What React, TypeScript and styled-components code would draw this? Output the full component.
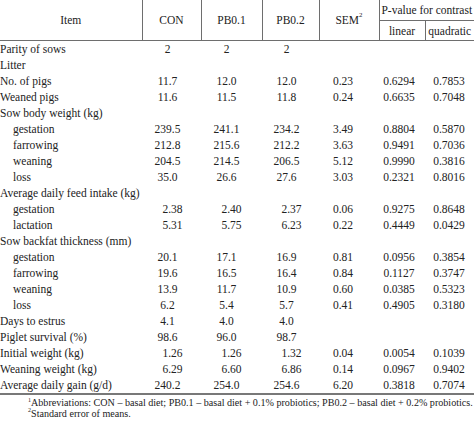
import React from 'react';
import styled, { createGlobalStyle } from 'styled-components';

const serif = '"Liberation Serif", "Times New Roman", serif';
const ink = '#222222';
const rule = '#6e6e6e';

const GlobalStyle = createGlobalStyle`
  html, body {
    margin: 0;
    padding: 0;
    background: #ffffff;
  }
  body {
    font-family: ${serif};
    color: ${ink};
  }
  table, th, td {
    font-family: ${serif};
  }
`;

const Page = styled.div`
  width: 474px;
  height: 427px;
  overflow: hidden;
  background: #fff;
`;

const Table = styled.table`
  width: 474px;
  table-layout: fixed;
  border-collapse: collapse;
  font-family: ${serif};
  font-size: 11.5px;
  color: ${ink};
`;

const HeadCell = styled.th<{ $last?: boolean; $split?: boolean; $h: number }>`
  font-family: ${serif};
  font-weight: normal;
  text-align: center;
  padding: 0;
  height: ${(p) => p.$h}px;
  line-height: 14px;
  border-right: ${(p) => (p.$last ? 'none' : `1px solid ${rule}`)};
  border-bottom: ${(p) => (p.$split ? `1px solid ${rule}` : 'none')};
  white-space: nowrap;
`;

const HeadRow = styled.tr<{ $bottom?: boolean }>`
  border-bottom: ${(p) => (p.$bottom ? `1.5px solid ${rule}` : 'none')};
`;

const Sup = styled.sup`
  font-size: 0.6em;
  line-height: 0;
  vertical-align: top;
  position: relative;
  top: 0.3em;
`;

const Row = styled.tr<{ $last?: boolean }>`
  height: 16px;
  border-bottom: ${(p) => (p.$last ? `2px solid #787878` : 'none')};
`;

const Label = styled.td<{ $sub?: boolean }>`
  font-family: ${serif};
  padding: 0 0 0 ${(p) => (p.$sub ? '13px' : '0')};
  white-space: nowrap;
  line-height: 16px;
  height: 16px;
`;

const Value = styled.td<{ $pad: number; $shift?: boolean }>`
  font-family: ${serif};
  text-align: center;
  padding: 0 ${(p) => p.$pad}px 0 ${(p) => (p.$shift ? 10 : 0)}px;
  white-space: nowrap;
  line-height: 16px;
  height: 16px;
`;

const Notes = styled.div`
  padding: 3px 0 0 28px;
  font-family: ${serif};
  font-size: 10.1px;
  line-height: 10.5px;
  color: ${ink};
  white-space: nowrap;
`;

const Note = styled.div``;

type Item = {
  label: string;
  sub?: boolean;
  shift?: boolean;
  values?: string[];
};

const rows: Item[] = [
  { label: 'Parity of sows', values: ['2', '2', '2', '', '', ''] },
  { label: 'Litter' },
  { label: 'No. of pigs', values: ['11.7', '12.0', '12.0', '0.23', '0.6294', '0.7853'] },
  { label: 'Weaned pigs', values: ['11.6', '11.5', '11.8', '0.24', '0.6635', '0.7048'] },
  { label: 'Sow body weight (kg)' },
  { label: 'gestation', sub: true, values: ['239.5', '241.1', '234.2', '3.49', '0.8804', '0.5870'] },
  { label: 'farrowing', sub: true, values: ['212.8', '215.6', '212.2', '3.63', '0.9491', '0.7036'] },
  { label: 'weaning', sub: true, values: ['204.5', '214.5', '206.5', '5.12', '0.9990', '0.3816'] },
  { label: 'loss', sub: true, values: ['35.0', '26.6', '27.6', '3.03', '0.2321', '0.8016'] },
  { label: 'Average daily feed intake (kg)' },
  { label: 'gestation', sub: true, shift: true, values: ['2.38', '2.40', '2.37', '0.06', '0.9275', '0.8648'] },
  { label: 'lactation', sub: true, shift: true, values: ['5.31', '5.75', '6.23', '0.22', '0.4449', '0.0429'] },
  { label: 'Sow backfat thickness (mm)' },
  { label: 'gestation', sub: true, values: ['20.1', '17.1', '16.9', '0.81', '0.0956', '0.3854'] },
  { label: 'farrowing', sub: true, values: ['19.6', '16.5', '16.4', '0.84', '0.1127', '0.3747'] },
  { label: 'weaning', sub: true, values: ['13.9', '11.7', '10.9', '0.60', '0.0385', '0.5323'] },
  { label: 'loss', sub: true, values: ['6.2', '5.4', '5.7', '0.41', '0.4905', '0.3180'] },
  { label: 'Days to estrus', values: ['4.1', '4.0', '4.0', '', '', ''] },
  { label: 'Piglet survival (%)', values: ['98.6', '96.0', '98.7', '', '', ''] },
  { label: 'Initial weight (kg)', shift: true, values: ['1.26', '1.26', '1.32', '0.04', '0.0054', '0.1039'] },
  { label: 'Weaning weight (kg)', shift: true, values: ['6.29', '6.60', '6.86', '0.14', '0.0967', '0.9402'] },
  { label: 'Average daily gain (g/d)', values: ['240.2', '254.0', '254.6', '6.20', '0.3818', '0.7074'] },
];

const widths = [142, 59, 61, 57, 60, 46, 49];
const pads = [8, 10, 8, 12, 6, 1];

export default function App() {
  return (
    <Page>
      <GlobalStyle />
      <Table>
        <colgroup>
          {widths.map((w, i) => (
            <col key={i} style={{ width: w }} />
          ))}
        </colgroup>
        <thead>
          <HeadRow>
            <HeadCell $h={20} rowSpan={2}>Item</HeadCell>
            <HeadCell $h={20} rowSpan={2}>CON</HeadCell>
            <HeadCell $h={20} rowSpan={2}>PB0.1</HeadCell>
            <HeadCell $h={20} rowSpan={2}>PB0.2</HeadCell>
            <HeadCell $h={20} rowSpan={2}>
              SEM<Sup>2</Sup>
            </HeadCell>
            <HeadCell $h={20} colSpan={2} $last $split>
              P-value for contrast
            </HeadCell>
          </HeadRow>
          <HeadRow $bottom>
            <HeadCell $h={19}>linear</HeadCell>
            <HeadCell $h={19} $last>quadratic</HeadCell>
          </HeadRow>
        </thead>
        <tbody>
          {rows.map((r, i) => (
            <Row key={i} $last={i === rows.length - 1}>
              <Label $sub={r.sub}>{r.label}</Label>
              {(r.values ?? ['', '', '', '', '', '']).map((v, j) => (
                <Value key={j} $pad={pads[j]} $shift={r.shift && j < 3}>
                  {v}
                </Value>
              ))}
            </Row>
          ))}
        </tbody>
      </Table>
      <Notes>
        <Note>
          <Sup>1</Sup>Abbreviations: CON – basal diet; PB0.1 – basal diet + 0.1% probiotics; PB0.2 – basal diet + 0.2% probiotics.
        </Note>
        <Note>
          <Sup>2</Sup>Standard error of means.
        </Note>
      </Notes>
    </Page>
  );
}
